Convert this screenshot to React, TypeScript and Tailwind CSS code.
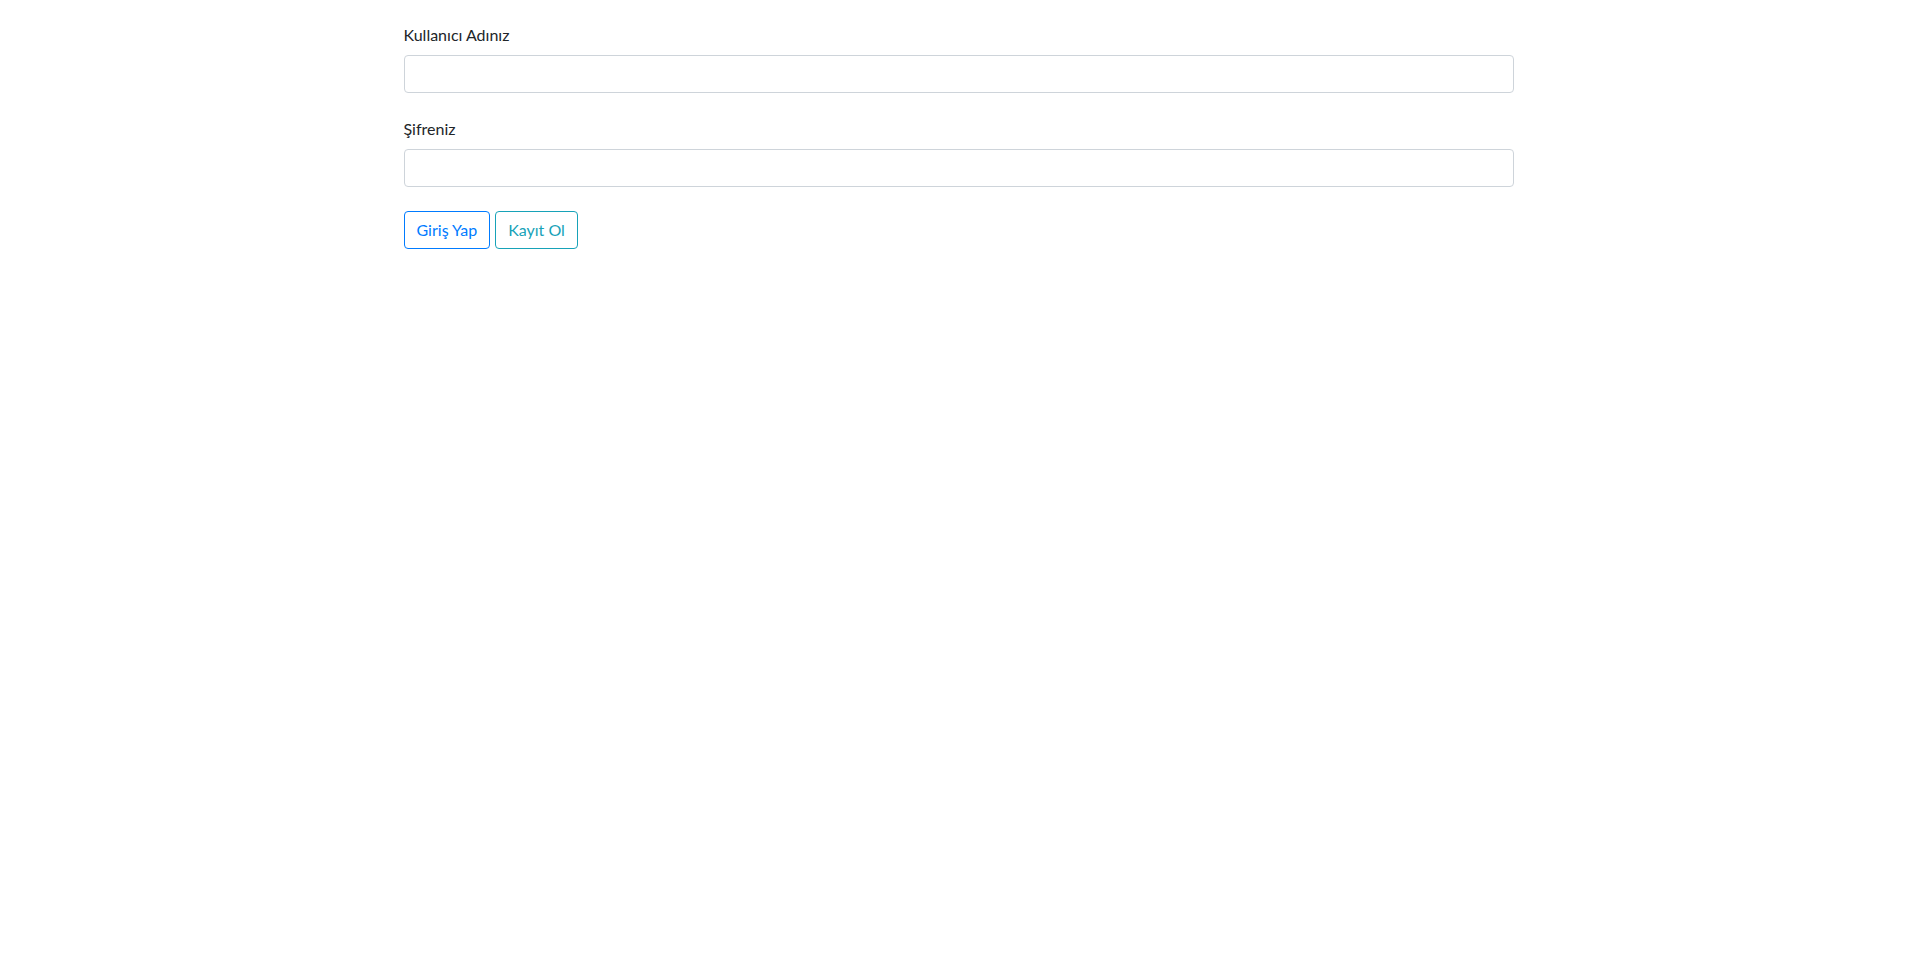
import React from "react";

export default function App() {
  return (
    <div className="min-h-screen bg-white text-[#212529] text-[16px] leading-[24px]" style={{ fontFamily: 'Lato, "Open Sans", sans-serif' }}>
      <div className="mx-auto w-[1140px] px-[15px] pt-[23px]">
        <div className="mb-[24px]">
          <label className="mb-[8px] inline-block">Kullanıcı Adınız</label>
          <input type="text" className="block h-[38px] w-full rounded-[4px] border border-[#ced4da] px-[12px] py-[6px] outline-none" />
        </div>
        <div className="mb-[24px]">
          <label className="mb-[8px] inline-block">Şifreniz</label>
          <input type="password" className="block h-[38px] w-full rounded-[4px] border border-[#ced4da] px-[12px] py-[6px] outline-none" />
        </div>
        <div className="flex gap-[5px]">
          <button className="h-[38px] rounded-[4px] border border-[#007bff] px-[12px] text-[#007bff]">Giriş Yap</button>
          <button className="h-[38px] rounded-[4px] border border-[#17a2b8] px-[12px] text-[#17a2b8]">Kayıt Ol</button>
        </div>
      </div>
    </div>
  );
}
